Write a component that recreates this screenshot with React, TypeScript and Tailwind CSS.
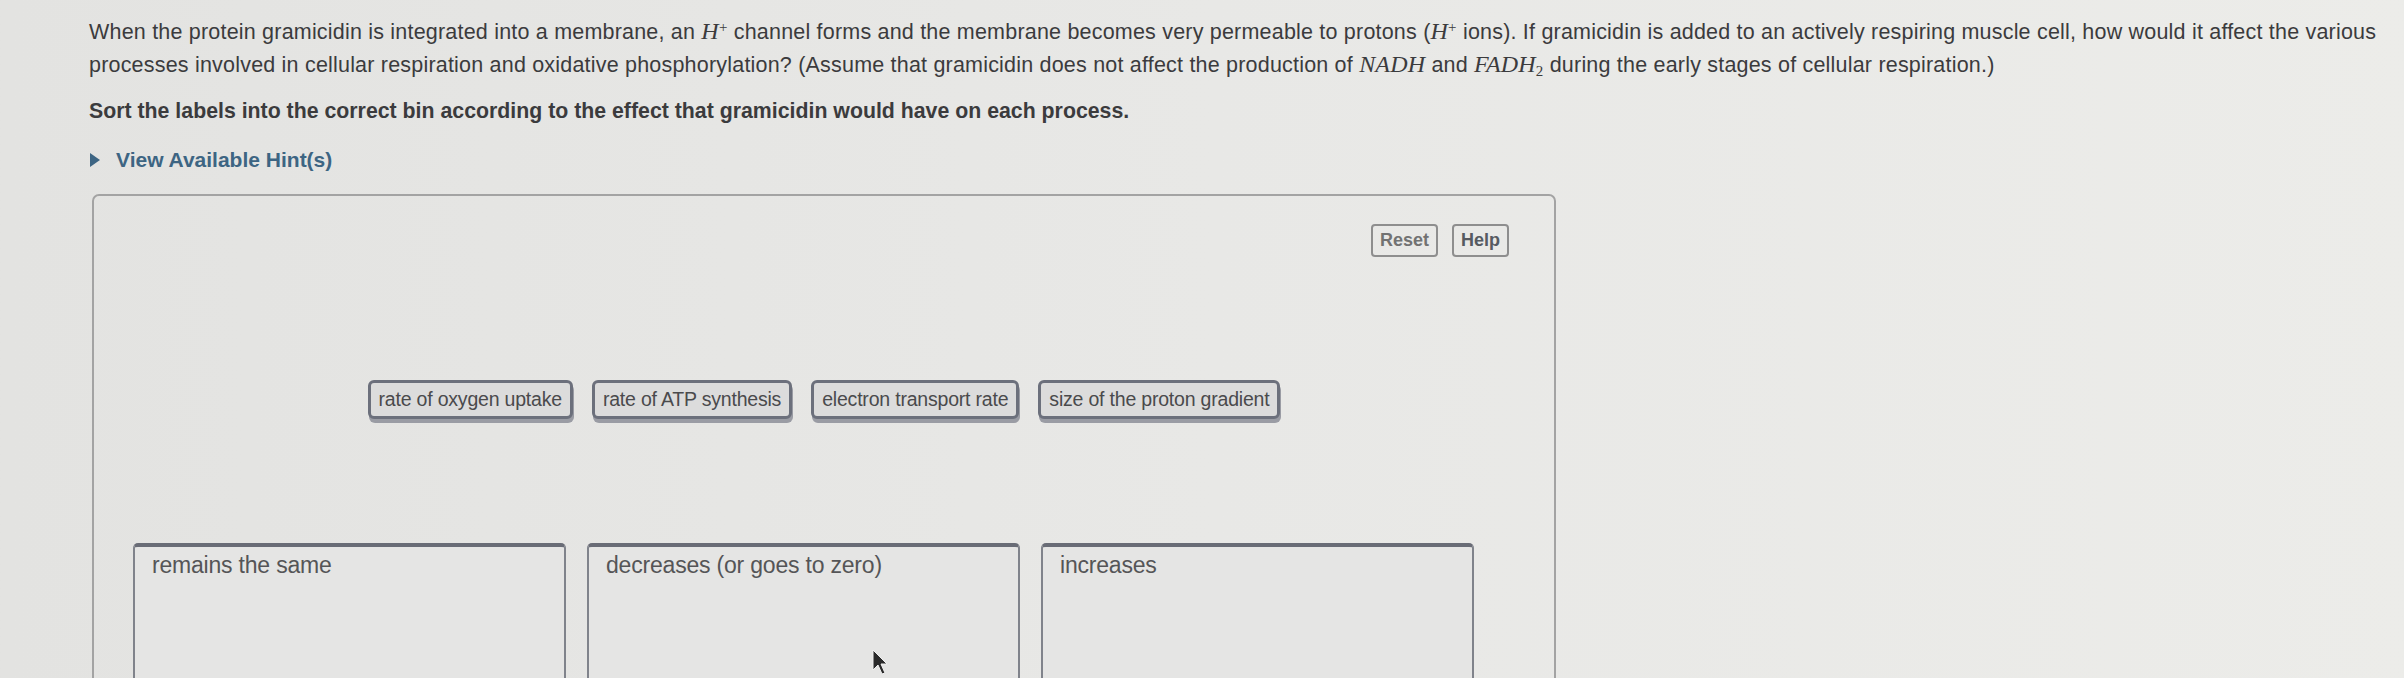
const labels = [
  "rate of oxygen uptake",
  "rate of ATP synthesis",
  "electron transport rate",
  "size of the proton gradient",
];

const bins = ["remains the same", "decreases (or goes to zero)", "increases"];

function M({ children }: { children: React.ReactNode }) {
  return <span className="font-['Liberation_Serif',serif] italic text-[24px]">{children}</span>;
}

function Hplus() {
  return (
    <M>
      H<sup className="not-italic text-[15px] leading-none">+</sup>
    </M>
  );
}

export default function App() {
  return (
    <div className="relative min-h-[678px] w-full overflow-hidden bg-gradient-to-r from-[#e3e3e1] via-[#e8e8e6] to-[#ecece9] font-['Liberation_Sans',Arial,sans-serif] text-[#3b3b3d]">
      <div className="pl-[89px] pt-[15px]">
        <p className="text-[21.5px] leading-[32px] tracking-[0.2px] w-[2300px]">
          When the protein gramicidin is integrated into a membrane, an <Hplus /> channel forms and the membrane
          becomes very permeable to protons (<Hplus /> ions). If gramicidin is added to an actively respiring muscle
          cell, how would it affect the various processes involved in cellular respiration and oxidative
          phosphorylation? (Assume that gramicidin does not affect the production of <M>NADH</M> and{" "}
          <M>
            FADH<sub className="not-italic text-[15px] leading-none">2</sub>
          </M>{" "}
          during the early stages of cellular respiration.)
        </p>
        <p className="mt-[14px] text-[21.3px] leading-[32px] font-bold">
          Sort the labels into the correct bin according to the effect that gramicidin would have on each process.
        </p>
        <div className="mt-[17px] flex items-center gap-[16px] text-[21px] leading-[32px] font-bold text-[#3d6583]">
          <svg width="10" height="14" viewBox="0 0 10 14" className="ml-[1px]">
            <path d="M0 0 L10 7 L0 14 Z" fill="#3d6583" />
          </svg>
          <span>View Available Hint(s)</span>
        </div>

        <div className="mt-[18px] ml-[3px] w-[1464px] h-[520px] rounded-[7px] border-[2px] border-[#a3a3a3]">
          <div className="flex justify-end gap-[14px] pt-[28px] pr-[45px]">
            <button className="h-[33px] px-[7px] rounded-[4px] border-[2px] border-[#8e8e8e] text-[18px] font-bold text-[#727272]">
              Reset
            </button>
            <button className="h-[33px] px-[7px] rounded-[4px] border-[2px] border-[#8e8e8e] text-[18px] font-bold text-[#565a61]">
              Help
            </button>
          </div>

          <div className="mt-[123px] flex justify-center gap-[19px]">
            {labels.map((l) => (
              <div
                key={l}
                className="h-[39px] px-[8px] flex items-center rounded-[6px] border-[3px] border-[#6c707c] bg-[#dcdcdc] shadow-[1px_4px_0_#9a9ca4] text-[19.5px] tracking-[-0.2px] text-[#4a4a4c]"
              >
                {l}
              </div>
            ))}
          </div>

          <div className="mt-[124px] pl-[39px] flex gap-[21px]">
            {bins.map((b) => (
              <div
                key={b}
                className="w-[433px] h-[200px] rounded-t-[5px] border-[2px] border-t-[4px] border-[#80838b] border-t-[#696c76] bg-[#e5e5e4] pl-[17px] pt-[1px] text-[23px] tracking-[-0.2px] text-[#555557]"
              >
                {b}
              </div>
            ))}
          </div>
        </div>
      </div>

      <svg className="absolute left-[872px] top-[649px]" width="16" height="26" viewBox="0 0 16 26">
        <path d="M1 1 L1 21 L6 16 L10 25 L13 24 L9 15 L15 15 Z" fill="#2a2a2a" stroke="#f0f0f0" strokeWidth="1" />
      </svg>
    </div>
  );
}
